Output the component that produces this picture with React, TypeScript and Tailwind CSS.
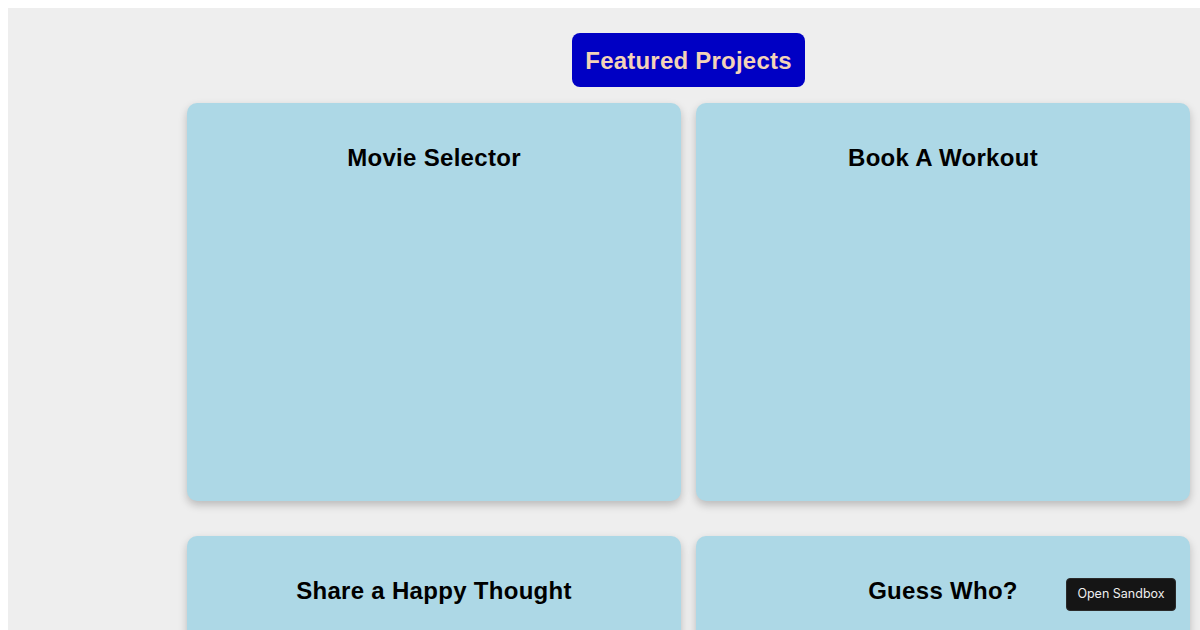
const projects = [
  { title: "Movie Selector" },
  { title: "Book A Workout" },
  { title: "Share a Happy Thought" },
  { title: "Guess Who?" },
];

function ProjectCard({ title }: { title: string }) {
  return (
    <div className="h-[398px] rounded-[10px] bg-[#add8e6] pt-[41px] shadow-[0_4px_8px_rgba(0,0,0,0.22)]">
      <h2 className="text-center text-[24px] font-bold leading-[28px] tracking-[0.3px] text-black">{title}</h2>
    </div>
  );
}

export default function App() {
  return (
    <div
      className="h-[630px] overflow-hidden bg-white pl-2 pt-2"
      style={{ fontFamily: '"Liberation Sans", Arial, sans-serif' }}
    >
      <div className="h-[700px] w-[1192px] bg-[#eeeeee] pl-[179px] pt-[25px]">
        <div className="flex w-[1003px] flex-col items-center">
          <h1 className="rounded-[8px] bg-[#0000c4] px-[13px] pb-[12px] pt-[14px] text-[24px] font-bold leading-[28px] tracking-[0.22px] text-[#f3d3b8]">
            Featured Projects
          </h1>
          <div className="mt-[16px] grid w-full grid-cols-2 gap-x-[15px] gap-y-[35px]">
            {projects.map((p) => (
              <ProjectCard key={p.title} title={p.title} />
            ))}
          </div>
        </div>
      </div>

      <button
        className="fixed bottom-[19px] right-[24px] h-[33px] w-[110px] rounded-[4px] border border-[#2a2a2a] bg-[#151515] text-[12.5px] text-[#eeeeee]"
        style={{ fontFamily: "Inter, sans-serif" }}
      >
        Open Sandbox
      </button>
    </div>
  );
}
